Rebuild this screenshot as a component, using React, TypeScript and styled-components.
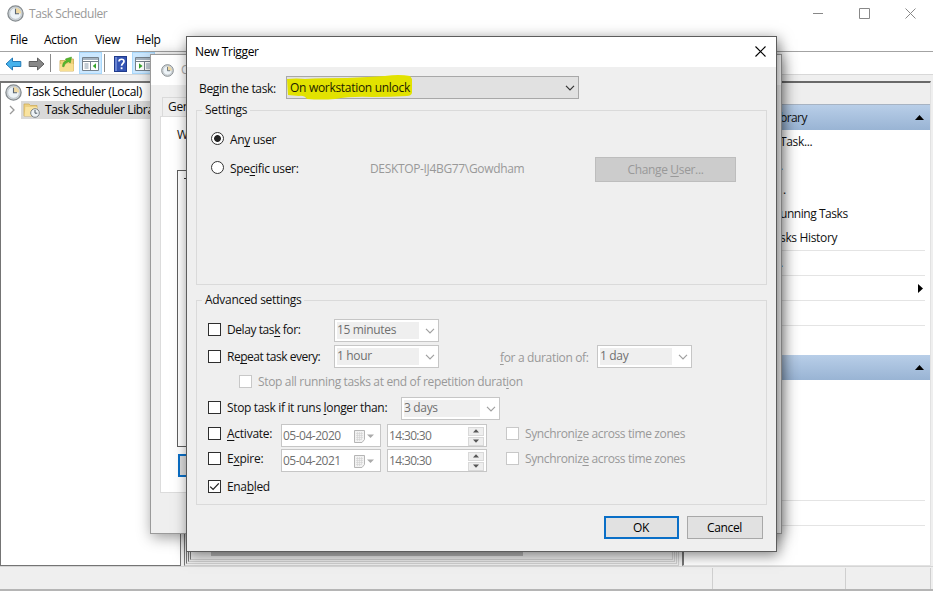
import React from "react";
import styled, { createGlobalStyle, css } from "styled-components";

const Global = createGlobalStyle`
  * { box-sizing: border-box; }
  html, body { margin: 0; padding: 0; overflow: hidden; background: #fff; }
  body { font: 12px/16px "Open Sans", "Noto Sans", sans-serif; color: #111; letter-spacing: -0.34px; }
  u { text-decoration-thickness: 1px; text-underline-offset: 2px; text-decoration-skip-ink: none; }
  svg { display: block; flex: none; }
`;

const T = styled.span<{ $ls?: number; $c?: string; $up?: number }>`
  white-space: pre;
  flex: none;
  ${(p) => p.$ls !== undefined && css`letter-spacing: ${p.$ls}px;`}
  ${(p) => p.$c && css`color: ${p.$c};`}
  ${(p) => p.$up !== undefined && css`transform: translateY(${-p.$up}px);`}
`;

/* ---------- main window ---------- */
const Desktop = styled.main`
  position: relative;
  width: 933px;
  height: 591px;
  overflow: hidden;
  background: #fff;
`;
const MainWindow = styled.section`
  display: flex;
  flex-direction: column;
  height: 591px;
`;
const TitleBar = styled.header`
  display: flex;
  align-items: center;
  height: 28px;
  padding: 0 17px 2px 7px;
  gap: 5px;
  color: #999;
`;
const WindowButtons = styled.div`
  display: flex;
  gap: 35px;
  margin-left: auto;
`;
const MenuBar = styled.nav`
  display: flex;
  height: 23px;
  padding: 4px 0 0 10px;
  color: #000;
`;
const MenuItem = styled.span<{ $w: number }>`
  width: ${(p) => p.$w}px;
`;
const ToolBar = styled.div`
  display: flex;
  align-items: center;
  height: 24px;
  border-top: 1px solid #a3a3a3;
  border-bottom: 1px solid #d8d8d8;
  padding-left: 5px;
`;
const ToolButton = styled.span<{ $active?: boolean; $w: number }>`
  display: flex;
  align-items: center;
  justify-content: center;
  flex: none;
  width: ${(p) => p.$w}px;
  height: 22px;
  padding-top: 1px;
  ${(p) => p.$active && css`background: #cce8ff; border: 1px solid #a9d8fb;`}
`;
const ToolRule = styled.i<{ $m: string }>`
  width: 1px;
  height: 18px;
  margin: ${(p) => p.$m};
  background: #8a8a8a;
`;
const Body = styled.div`
  display: grid;
  grid-template-columns: 181px 495px 249px;
  column-gap: 3px;
  height: 491px;
  padding-top: 6px;
  background: #efefef;
`;
const TreePane = styled.aside`
  border: solid #747474;
  border-width: 2px 1px 1px 1px;
  background: #fff;
`;
const TreeRow = styled.div<{ $pl: number }>`
  display: flex;
  align-items: center;
  height: 18px;
  padding-left: ${(p) => p.$pl}px;
  color: #000;
`;
const Selected = styled.div`
  display: flex;
  align-items: center;
  flex: 1;
  height: 18px;
  gap: 5px;
  margin-left: 6px;
  padding-left: 2px;
  background: #d9d9d9;
`;
const Frame = styled.div`
  height: 100%;
  padding: 1px 1px;
  background: #efefef;
  border: 1px solid #d0d0d0;
  border-left-color: #777;
`;
const ScrollTrack = styled.div`
  display: flex;
  height: 100%;
  padding: 0 148px 2px 19px;
  align-items: flex-end;
`;
const Thumb = styled.i`
  flex: 1;
  height: 8px;
  background: #b9b9b9;
`;
const ActionsPane = styled.aside`
  display: flex;
  flex-direction: column;
  border: solid #e2e2e2;
  border-width: 2px 1px 1px 2px;
  border-top-color: #696969;
  border-left-color: #747474;
  background: #fff;
  color: #111;
`;
const PaneHead = styled.div`
  height: 22px;
  flex: none;
  background: #eee;
  border-bottom: 1px solid #a7b3c2;
`;
const SectionHead = styled.div`
  display: flex;
  align-items: center;
  justify-content: space-between;
  height: 25px;
  flex: none;
  padding: 0 6px 0 96px;
  background: linear-gradient(#b8cee8, #99b4d4);
`;
const ActionRow = styled.div<{ $h?: number; $rule?: boolean }>`
  display: flex;
  align-items: center;
  flex: none;
  height: ${(p) => p.$h ?? 24}px;
  padding: 0 0 0 96px;
  margin-right: 5px;
  ${(p) => p.$rule && css`border-bottom: 1px solid #e4e4e4;`}
`;
const Arrow = styled.svg`
  margin-left: auto;
  margin-right: 2px;
`;
const StatusBar = styled.footer`
  display: flex;
  justify-content: flex-end;
  height: 25px;
  background: #efefef;
  border-top: 1px solid #d5d5d5;
  border-bottom: 2px solid #b5b5b5;
`;
const StatusCell = styled.i<{ $w: number }>`
  width: ${(p) => p.$w}px;
  height: 21px;
  margin-top: 1px;
  border-left: 1px solid #cfcfcf;
`;

/* ---------- create-task window ---------- */
const BackWindow = styled.section`
  position: absolute;
  left: 150px;
  top: 54px;
  width: 632px;
  height: 480px;
  background: #efefef;
  border: 1px solid #9a9a9a;
  box-shadow: 2px 3px 14px rgba(0, 0, 0, 0.42);
`;
const BackTitle = styled.header`
  display: flex;
  align-items: center;
  gap: 7px;
  height: 30px;
  padding-left: 10px;
  background: #fff;
  color: #aaa;
`;
const Tab = styled.div`
  width: 60px;
  height: 19px;
  margin: 12px 0 0 11px;
  padding: 1px 0 0 5px;
  background: #efefef;
  border: 1px solid #dadada;
  border-bottom: 0;
`;
const TabPage = styled.div`
  width: 612px;
  height: 377px;
  margin-left: 9px;
  padding: 10px 0 0 16px;
  background: #fff;
  border: 1px solid #dcdcdc;
`;
const ListBox = styled.div`
  width: 570px;
  height: 277px;
  margin-top: 27px;
  border: 1px solid #5e5e5e;
`;
const ListHead = styled.div`
  width: 3px;
  height: 8px;
  margin-left: 6px;
  border-bottom: 1px solid #333;
`;
const BackButton = styled.div`
  width: 75px;
  height: 23px;
  margin: 7px 0 0 1px;
  border: 2px solid #0a6fc7;
  background: #dedede;
`;

/* ---------- trigger dialog ---------- */
const Dialog = styled.section`
  position: absolute;
  left: 186px;
  top: 36px;
  width: 591px;
  height: 516px;
  background: #efefef;
  border: 1px solid #5c5c5c;
  box-shadow: 2px 3px 13px rgba(0, 0, 0, 0.5);
`;
const DialogTitle = styled.header`
  display: flex;
  align-items: center;
  justify-content: space-between;
  height: 30px;
  padding: 0 10px 2px 8px;
  background: #fff;
  color: #000;
`;
const BeginRow = styled.div`
  display: flex;
  align-items: center;
  height: 23px;
  margin: 9px 0 0 12px;
`;
const Slot = styled.span<{ $w: number }>`
  display: flex;
  align-items: center;
  flex: none;
  width: ${(p) => p.$w}px;
`;
const MainCombo = styled.div`
  position: relative;
  display: flex;
  align-items: center;
  justify-content: space-between;
  width: 293px;
  height: 23px;
  padding: 0 3px 0 3px;
  background: #e1e1e1;
  border: 1px solid #a8a8a8;
`;
const Marker = styled.svg`
  position: absolute;
  left: 0;
  top: -3px;
`;
const MarkedText = styled.span`
  position: relative;
  color: #1c1c00;
  letter-spacing: -0.3px;
`;
const Group = styled.div<{ $h: number; $mt: number }>`
  height: ${(p) => p.$h}px;
  width: 571px;
  margin: ${(p) => p.$mt}px 0 0 9px;
  border: 1px solid #dadada;
`;
const Legend = styled.div`
  width: max-content;
  height: 16px;
  margin: -9px 0 0 5px;
  padding: 0 3px;
  background: #efefef;
  letter-spacing: -0.3px;
`;
const Row = styled.div<{ $mt: number; $h?: number; $pl?: number }>`
  display: flex;
  align-items: center;
  height: ${(p) => p.$h ?? 23}px;
  margin-top: ${(p) => p.$mt}px;
  padding-left: ${(p) => p.$pl ?? 11}px;
`;
const Box = styled.span<{ $off?: boolean; $up?: number }>`
  flex: none;
  width: 13px;
  height: 13px;
  margin-right: 6px;
  background: #fff;
  border: 1px solid ${(p) => (p.$off ? "#c8c8c8" : "#2e2e2e")};
  transform: translateY(${(p) => -(p.$up ?? 0)}px);
`;
const Radio = styled.span<{ $on?: boolean }>`
  flex: none;
  width: 13px;
  height: 13px;
  margin-right: 6px;
  border: 1px solid #333;
  border-radius: 50%;
  transform: translateY(-1px);
  background: ${(p) => (p.$on ? "radial-gradient(circle, #222 0 3px, #fff 3.8px)" : "#fff")};
`;
const Combo = styled.div<{ $w: number }>`
  display: flex;
  align-items: center;
  flex: none;
  width: ${(p) => p.$w}px;
  height: 23px;
  padding: 0 3px 0 2px;
  background: #fff;
  border: 1px solid #c6c6c6;
  color: #707070;
`;
const ComboValue = styled.span`
  flex: 1;
  height: 17px;
  margin-right: 6px;
  line-height: 16px;
  background: #efefef;
`;
const Field = styled.div<{ $w: number; $ml?: number }>`
  display: flex;
  align-items: center;
  justify-content: space-between;
  flex: none;
  width: ${(p) => p.$w}px;
  height: 23px;
  margin-left: ${(p) => p.$ml ?? 0}px;
  padding: 1px 2px 0 1px;
  background: #fff;
  border: 1px solid #c6c6c6;
  color: #707070;
`;
const Spinner = styled.span`
  display: flex;
  flex-direction: column;
  gap: 1px;
  width: 16px;
`;
const SpinButton = styled.span`
  display: flex;
  align-items: center;
  justify-content: center;
  height: 9px;
  background: #eee;
  border: 1px solid #d9d9d9;
`;
const DisabledButton = styled.div`
  display: flex;
  align-items: center;
  justify-content: center;
  width: 141px;
  height: 25px;
  margin-top: 2px;
  padding-top: 1px;
  background: #ccc;
  border: 1px solid #bdbdbd;
  color: #999;
`;
const Buttons = styled.div`
  display: flex;
  justify-content: flex-end;
  gap: 8px;
  margin: 11px 13px 0 0;
`;
const Button = styled.button<{ $primary?: boolean }>`
  width: ${(p) => (p.$primary ? 75 : 76)}px;
  height: 23px;
  padding: 0 1px 0 0;
  font: inherit;
  letter-spacing: inherit;
  color: #000;
  background: #e1e1e1;
  border: ${(p) => (p.$primary ? "2px solid #0a6fc7" : "1px solid #a8a8a8")};
`;

const Clock = ({ s = 17 }: { s?: number }) => (
  <svg width={s} height={s} viewBox="0 0 17 17">
    <circle cx="8.5" cy="8.5" r="7.6" fill="#d3d9dc" stroke="#858b8f" strokeWidth="1.3" />
    <circle cx="8.5" cy="8.5" r="5.8" fill="#edf3f7" stroke="#b5bcc1" strokeWidth=".7" />
    <path d="M8.5 8.5V2.8A5.7 5.7 0 0 1 14.2 8.5Z" fill="#efd9a4" />
    <path d="M8.5 3.8V8.8H12" fill="none" stroke="#5b6672" strokeWidth="1.1" />
  </svg>
);
const Chevron = ({ c = "#a0a0a0" }: { c?: string }) => (
  <svg width="10" height="6" viewBox="0 0 10 6">
    <path d="M1 .8 5 4.8 9 .8" fill="none" stroke={c} strokeWidth="1.2" />
  </svg>
);
const BigArrow = ({ fill, line, flip }: { fill: string; line: string; flip?: boolean }) => (
  <svg width="17" height="14" viewBox="0 0 17 14">
    <path
      d="M1 7 7.5 1V4.5H15.8V9.5H7.5V13Z"
      transform={flip ? "translate(17 0) scale(-1 1)" : undefined}
      fill={fill}
      stroke={line}
      strokeLinejoin="round"
    />
  </svg>
);
const FolderUp = () => (
  <svg width="16" height="16" viewBox="0 0 16 16">
    <path d="M1 4.5H6L7.5 3H14.5V15H1Z" fill="#f0d27c" stroke="#cba74c" strokeWidth=".8" />
    <path d="M1 8H14.5V15H1Z" fill="#f8df91" />
    <path d="M3.5 10.5C3.6 7.5 5 5.2 7.5 4.6L6.4 3 12.5 1 11.3 7 9.6 5.8C7.3 6.4 5.6 8 5 10.8Z" fill="#55b82d" stroke="#3c941d" strokeWidth=".5" />
  </svg>
);
const PaneIcon = ({ right }: { right?: boolean }) => (
  <svg width="17" height="14" viewBox="0 0 17 14">
    <path d="M.5 .5H16.5V13.5H.5Z" fill="#fff" stroke="#75818c" />
    <path d="M1 1H16V3H1Z" fill="#a7b3bf" />
    <path d="M1 4.5H16" stroke="#75818c" />
    <path d={right ? "M9.5 5V13" : "M8.5 5V13"} stroke="#75818c" />
    <path d={right ? "M11 7H15M11 9H15M11 11H15" : "M2.5 7H6.5M2.5 9H6.5M2.5 11H6.5"} stroke="#889bac" />
    <path d={right ? "M4 6.2 7.5 9 4 11.8Z" : "M14 6.2 10.8 9 14 11.8Z"} fill="#35a52a" />
  </svg>
);
const HelpIcon = () => (
  <svg width="13" height="16" viewBox="0 0 13 16">
    <rect x=".5" y=".5" width="12" height="15" fill="#3454b4" stroke="#203b8c" />
    <path d="M1 1H3V15H1Z" fill="#6b86d3" />
    <path d="M5 5.5C5 2.4 10 2.6 10 5.4 10 7.3 7.6 7.5 7.6 9.7" fill="none" stroke="#fff" strokeWidth="1.7" />
    <rect x="6.7" y="11.3" width="1.8" height="1.9" fill="#fff" />
  </svg>
);
const FolderClock = () => (
  <svg width="17" height="16" viewBox="0 0 17 16">
    <path d="M1 2H6L7.5 3.5H14V14H1Z" fill="#ecd083" stroke="#cfa94e" strokeWidth=".7" />
    <path d="M2.5 5H14V14H1.5Z" fill="#f9e3a0" />
    <circle cx="12" cy="11" r="4.3" fill="#eef3f6" stroke="#7a838a" />
    <path d="M12 8V11.2H14.3" fill="none" stroke="#4d5963" />
  </svg>
);
const UpTri = () => (
  <svg width="9" height="5" viewBox="0 0 9 5"><path d="M0 5 4.5 0 9 5Z" fill="#000" /></svg>
);
const Tick = () => (
  <svg width="11" height="11" viewBox="0 0 11 11"><path d="M1.2 5.6 4.1 8.4 9.8 2.4" fill="none" stroke="#222" strokeWidth="1.3" /></svg>
);
const CalendarDrop = () => (
  <svg width="21" height="13" viewBox="0 0 21 13">
    <path d="M.5 .5H10.5V9.5L8 12.5H.5Z" fill="#f2f2f2" stroke="#b5b5b5" />
    <path d="M2 3.5H9M2 5.5H9M2 7.5H9M2 9.5H7M3.5 2V11M5.5 2V11M7.5 2V10" stroke="#d0d0d0" strokeWidth=".6" />
    <path d="M13 4.5H20L16.5 8Z" fill="#aaa" />
  </svg>
);
const Spin = () => (
  <Spinner>
    <SpinButton><svg width="6" height="4" viewBox="0 0 6 4"><path d="M0 3.5 3 .3 6 3.5Z" fill="#555" /></svg></SpinButton>
    <SpinButton><svg width="6" height="4" viewBox="0 0 6 4"><path d="M0 .5 3 3.7 6 .5Z" fill="#555" /></svg></SpinButton>
  </Spinner>
);

const Select = ({ w, value }: { w: number; value: string }) => (
  <Combo $w={w}><ComboValue><T>{value}</T></ComboValue><Chevron /></Combo>
);

const ScheduleRow = ({ label, date, mt, sync }: { label: React.ReactNode; date: string; mt: number; sync: React.ReactNode }) => (
  <Row $mt={mt}>
    <Slot $w={73}><Box $up={2} /><T $ls={-0.25} $up={2}>{label}</T></Slot>
    <Field $w={100}><T $ls={-0.5}>{date}</T><Slot $w={24}><CalendarDrop /></Slot></Field>
    <Field $w={100} $ml={6}><T $ls={-0.65}>14:30:30</T><Spin /></Field>
    <Slot $w={19} />
    <Box $off $up={2} /><T $c="#999" $ls={-0.38} $up={2}>{sync}</T>
  </Row>
);

export default function App() {
  return (
    <Desktop>
      <Global />
      <MainWindow>
        <TitleBar>
          <Clock /><T $up={-1} $ls={-0.42}>Task Scheduler</T>
          <WindowButtons>
            <svg width="11" height="11"><path d="M0 5.5H10" stroke="#888" /></svg>
            <svg width="11" height="11"><path d="M.5 .5H10.5V10.5H.5Z" fill="none" stroke="#888" /></svg>
            <svg width="11" height="11"><path d="M.5 .5 10.5 10.5M10.5 .5 .5 10.5" stroke="#888" /></svg>
          </WindowButtons>
        </TitleBar>
        <MenuBar>
          <MenuItem $w={34}>File</MenuItem><MenuItem $w={51}>Action</MenuItem>
          <MenuItem $w={41}>View</MenuItem><MenuItem $w={40}>Help</MenuItem>
        </MenuBar>
        <ToolBar>
          <ToolButton $w={17}><BigArrow fill="#45b2ec" line="#2379b5" /></ToolButton>
          <ToolButton $w={28}><BigArrow fill="#888" line="#5e5e5e" flip /></ToolButton>
          <ToolRule $m="0 7px 0 0" />
          <ToolButton $w={18}><FolderUp /></ToolButton>
          <Slot $w={3} />
          <ToolButton $w={23} $active><PaneIcon /></ToolButton>
          <ToolRule $m="0 8px 0 2px" />
          <ToolButton $w={15}><HelpIcon /></ToolButton>
          <Slot $w={4} />
          <ToolButton $w={23} $active><PaneIcon right /></ToolButton>
        </ToolBar>
        <Body>
          <TreePane>
            <TreeRow $pl={4}><Clock /><Slot $w={4} /><T>Task Scheduler (Local)</T></TreeRow>
            <TreeRow $pl={8}>
              <svg width="6" height="10"><path d="M1 1 5 5 1 9" fill="none" stroke="#999" strokeWidth="1.3" /></svg>
              <Selected><FolderClock /><T>Task Scheduler Library</T></Selected>
            </TreeRow>
          </TreePane>
          <Frame><Frame><Frame><Frame><ScrollTrack><Thumb /></ScrollTrack></Frame></Frame></Frame></Frame>
          <ActionsPane>
            <PaneHead />
            <SectionHead><T $ls={-0.6}>brary</T><UpTri /></SectionHead>
            <ActionRow><T>Task...</T></ActionRow>
            <ActionRow><T $ls={0}>.</T></ActionRow>
            <ActionRow><T $ls={0}> .</T></ActionRow>
            <ActionRow><T $ls={-0.45}>unning Tasks</T></ActionRow>
            <ActionRow $h={25} $rule><T>sks History</T></ActionRow>
            <ActionRow $h={25} $rule><T $ls={0}>.</T></ActionRow>
            <ActionRow $h={25} $rule>
              <Arrow width="5" height="9"><path d="M0 0 5 4.5 0 9Z" /></Arrow>
            </ActionRow>
            <ActionRow $h={25} $rule />
            <ActionRow $h={29} />
            <SectionHead><T /><UpTri /></SectionHead>
            <ActionRow $h={121} $rule />
            <ActionRow $h={25} $rule />
          </ActionsPane>
        </Body>
        <StatusBar><StatusCell $w={133} /><StatusCell $w={85} /><StatusCell $w={3} /></StatusBar>
      </MainWindow>

      <BackWindow>
        <BackTitle><Clock s={13} /><T>C</T></BackTitle>
        <Tab><T>Gen</T></Tab>
        <TabPage>
          <T>W</T>
          <ListBox><ListHead /></ListBox>
          <BackButton />
        </TabPage>
      </BackWindow>

      <Dialog>
        <DialogTitle>
          <T $up={-1}>New Trigger</T>
          <svg width="11" height="11"><path d="M.5 .5 10.5 10.5M10.5 .5 .5 10.5" stroke="#000" strokeWidth="1.1" /></svg>
        </DialogTitle>
        <BeginRow>
          <Slot $w={87}><T $up={-1} $ls={-0.36}>Be<u>g</u>in the task:</T></Slot>
          <MainCombo>
            <Marker width="126" height="27" viewBox="0 0 126 27">
              <path d="M0 5Q10 4 18 5 36 4 60 4 82 3 98 2 112 0 123 2L125 5V19Q124 22 120 22 104 23 86 23 64 22 48 25 34 26 20 25 17 21 12 22L1 21Z" fill="#e2e200" />
            </Marker>
            <MarkedText>On workstation unlock</MarkedText>
            <Chevron c="#333" />
          </MainCombo>
        </BeginRow>
        <Group $h={175} $mt={11}>
          <Legend>Settings</Legend>
          <Row $mt={10} $pl={14}><Radio $on /><T>An<u>y</u> user</T></Row>
          <Row $mt={5} $h={25} $pl={14}>
            <Slot $w={159}><Radio /><T>Spe<u>c</u>ific user:</T></Slot>
            <Slot $w={225}><T $c="#999">DESKTOP-IJ4BG77\Gowdham</T></Slot>
            <DisabledButton><T>Change <u>U</u>ser...</T></DisabledButton>
          </Row>
        </Group>
        <Group $h={205} $mt={15}>
          <Legend>Advanced settings</Legend>
          <Row $mt={11}>
            <Slot $w={126}><Box $up={1} /><T $ls={-0.42} $up={1}>Delay tas<u>k</u> for:</T></Slot>
            <Select w={105} value="15 minutes" />
          </Row>
          <Row $mt={3}>
            <Slot $w={126}><Box /><T $ls={-0.48}>Re<u>p</u>eat task every:</T></Slot>
            <Select w={105} value="1 hour" />
            <Slot $w={61} />
            <Slot $w={97}><T $c="#999" $up={-1}><u>f</u>or a duration of:</T></Slot>
            <Select w={95} value="1 day" />
          </Row>
          <Row $mt={2} $pl={42}><Box $off /><T $c="#999">Stop all running tasks at end of repetition durat<u>i</u>on</T></Row>
          <Row $mt={4}>
            <Slot $w={193}><Box $up={1} /><T $up={1}>Stop task if it runs <u>l</u>onger than:</T></Slot>
            <Select w={99} value="3 days" />
          </Row>
          <ScheduleRow mt={4} date="05-04-2020" label={<><u>A</u>ctivate:</>} sync={<>Synchroni<u>z</u>e across time zones</>} />
          <ScheduleRow mt={2} date="05-04-2021" label={<>E<u>x</u>pire:</>} sync={<>Synchroniz<u>e</u> across time zones</>} />
          <Row $mt={3}><Box><Tick /></Box><T>Ena<u>b</u>led</T></Row>
        </Group>
        <Buttons><Button $primary>OK</Button><Button>Cancel</Button></Buttons>
      </Dialog>
    </Desktop>
  );
}
